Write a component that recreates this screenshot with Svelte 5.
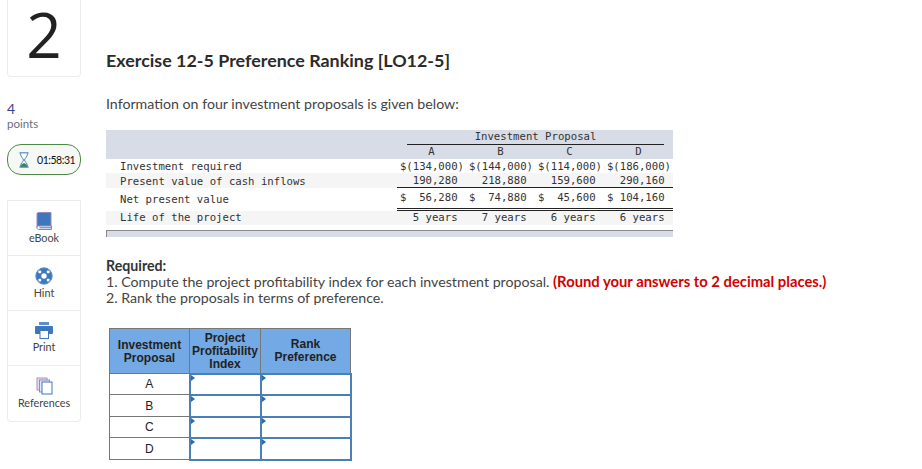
<script>
  const rows = [
    { label: 'Investment required', cls: 'r1', vals: ['$(134,000)', '$(144,000)', '$(114,000)', '$(186,000)'] },
    { label: 'Present value of cash inflows', cls: 'r2 alt', vals: ['190,280 ', '218,880 ', '159,600 ', '290,160 '] },
    { label: 'Net present value', cls: 'r3', vals: ['$  56,280 ', '$  74,880 ', '$  45,600 ', '$ 104,160 '] },
    { label: 'Life of the project', cls: 'r4 alt', vals: ['5 years ', '7 years ', '6 years ', '6 years '] }
  ];
  const answers = ['A', 'B', 'C', 'D'];
</script>

<div class="page">
  <aside class="side">
    <div class="qnum">2</div>
    <div class="points"><span class="pts-n">4</span><span class="pts-l">points</span></div>
    <div class="timer">
      <svg width="10" height="16" viewBox="0 0 10 16">
        <path d="M.5 1h9M.5 15h9" stroke="#4a86c5" stroke-width="1.600" fill="none"/>
        <path d="M1.500 1.500c0 3.500 2.800 4.800 3 6.500-.2 1.700-3 3-3 6.500h7c0-3.500-2.800-4.800-3-6.500.2-1.700 3-3 3-6.500" stroke="#4a86c5" stroke-width="1" fill="#fff"/>
        <path d="M1.600 14.500c.4-2 2.200-3 3.400-3.400 1.200.4 3 1.400 3.400 3.400z" fill="#3f8a3f"/>
      </svg>
      <span>01:58:31</span>
    </div>
    <nav class="tools">
      <div class="tool">
        <svg width="17" height="18" viewBox="0 0 17 18">
          <path d="M1 2.200C1 1.200 1.700.5 2.600.5H15v13.500H2.600C1.700 14 1 14.600 1 15.500z" fill="#3d78bd" stroke="#9c86bd" stroke-width="1"/>
          <path d="M1 15.500c0-1 .7-1.500 1.600-1.500H15.500v3.500H2.600C1.700 17.500 1 16.500 1 15.500z" fill="#fff" stroke="#8d7fb5" stroke-width="1"/>
          <path d="M3.500 15.800h11.500" stroke="#3d78bd" stroke-width="1"/>
        </svg>
        <span>eBook</span>
      </div>
      <div class="tool">
        <svg width="18" height="18" viewBox="0 0 18 18">
          <circle cx="9" cy="9" r="8.200" fill="#3d78bd" stroke="#5b8fcb" stroke-width="1"/>
          <circle cx="9" cy="9" r="2.700" fill="#fff"/>
          <rect x="3.400" y="3.400" width="2.800" height="2.800" rx=".8" fill="#fff"/>
          <rect x="11.800" y="3.400" width="2.800" height="2.800" rx=".8" fill="#fff"/>
          <rect x="3.400" y="11.800" width="2.800" height="2.800" rx=".8" fill="#fff"/>
          <rect x="11.800" y="11.800" width="2.800" height="2.800" rx=".8" fill="#fff"/>
        </svg>
        <span>Hint</span>
      </div>
      <div class="tool">
        <svg width="18" height="17" viewBox="0 0 18 17">
          <rect x="4" y="0" width="10" height="3" fill="#5b8fcb"/>
          <rect x="0" y="4" width="18" height="8" rx="1" fill="#3d78bd"/>
          <rect x="5" y="8.500" width="8.500" height="8" fill="#fff" stroke="#3d78bd"/>
        </svg>
        <span>Print</span>
      </div>
      <div class="tool">
        <svg width="17" height="18" viewBox="0 0 17 18">
          <rect x="1" y="1" width="10" height="12" fill="#e6def0" stroke="#a393c4"/>
          <rect x="3.500" y="3" width="10" height="12" fill="#e6e6f2" stroke="#8d8db8"/>
          <rect x="6" y="5" width="10" height="12" fill="#fff" stroke="#3d78bd"/>
        </svg>
        <span>References</span>
      </div>
    </nav>
  </aside>

  <main class="main">
    <h1>Exercise 12-5 Preference Ranking [LO12-5]</h1>
    <p class="intro">Information on four investment proposals is given below:</p>

    <table class="data">
      <thead>
        <tr class="h1">
          <th class="lab"></th>
          <th colspan="4"><span class="span-title">Investment Proposal</span></th>
        </tr>
        <tr class="h2">
          <th class="lab"></th>
          <th>A</th><th>B</th><th>C</th><th>D</th>
        </tr>
      </thead>
      <tbody>
        {#each rows as row}
          <tr class={row.cls}>
            <td class="lab">{row.label}</td>
            {#each row.vals as v}
              <td class="num">{v}</td>
            {/each}
          </tr>
        {/each}
        <tr class="gap"><td colspan="5"></td></tr>
        <tr class="foot"><td colspan="5"></td></tr>
      </tbody>
    </table>

    <div class="required">
      <div class="req-h">Required:</div>
      <div>1. Compute the project profitability index for each investment proposal. <b>(Round your answers to 2 decimal places.)</b></div>
      <div>2. Rank the proposals in terms of preference.</div>
    </div>

    <table class="answer">
      <thead>
        <tr>
          <th class="c1">Investment<br />Proposal</th>
          <th class="c2">Project<br />Profitability<br />Index</th>
          <th class="c3">Rank<br />Preference</th>
        </tr>
      </thead>
      <tbody>
        {#each answers as a}
          <tr>
            <td class="name">{a}</td>
            <td class="input"><i></i></td>
            <td class="input"><i></i></td>
          </tr>
        {/each}
      </tbody>
    </table>
  </main>
</div>

<style>
  :global(body) {
    margin: 0;
    background: #fff;
  }
  .page {
    display: flex;
    width: 922px;
    height: 469px;
    overflow: hidden;
    font-family: Lato, "Open Sans", sans-serif;
    color: #333;
  }
  .side {
    width: 74px;
    margin-left: 7px;
    flex: none;
    display: flex;
    flex-direction: column;
  }
  .qnum {
    height: 77px;
    box-sizing: border-box;
    border: 1px solid #ececec;
    border-top: none;
    border-radius: 0 0 4px 4px;
    font-size: 62px;
    line-height: 68px;
    text-align: center;
    color: #222;
    font-family: "Open Sans", sans-serif;
  }
  .points {
    margin-top: 24px;
    display: flex;
    flex-direction: column;
  }
  .pts-n {
    font-size: 14px;
    line-height: 16px;
    color: #3b3f94;
  }
  .pts-l {
    font-size: 11.500px;
    line-height: 14px;
    color: #6d6d80;
  }
  .timer {
    margin-top: 13px;
    height: 31px;
    box-sizing: border-box;
    border: 1px solid #4d8a45;
    border-radius: 14px;
    background: #f5f8f4;
    display: flex;
    align-items: center;
    gap: 8px;
    padding-left: 11px;
    font-size: 10.500px;
    letter-spacing: -0.45px;
    color: #111;
    white-space: nowrap;
  }
  .tools {
    margin-top: 25px;
    border: 1px solid #ececec;
    border-radius: 0 0 4px 4px;
    display: flex;
    flex-direction: column;
  }
  .tool {
    height: 55px;
    box-sizing: border-box;
    border-bottom: 1px solid #ececec;
    display: flex;
    flex-direction: column;
    align-items: center;
    gap: 1px;
    padding-top: 11px;
    font-size: 10.800px;
    line-height: 14px;
    color: #444;
  }
  .tool:last-child {
    border-bottom: none;
  }
  .main {
    margin-left: 25px;
    flex: 1;
    min-width: 0;
  }
  h1 {
    margin: 50px 0 0;
    font-size: 17.900px;
    line-height: 21px;
    font-weight: 700;
    color: #2b2b2b;
  }
  .intro {
    margin: 24px 0 0;
    font-size: 14.200px;
    line-height: 17px;
    color: #444;
  }
  .data {
    margin-top: 18px;
    width: 567px;
    border-collapse: separate;
    border-spacing: 0;
    table-layout: fixed;
    font-family: "DejaVu Sans Mono", monospace;
    font-size: 10.650px;
    color: #333;
  }
  .data th, .data td {
    padding: 0;
    font-weight: 400;
    white-space: pre;
  }
  .data th.lab, .data td.lab {
    width: 291px;
  }
  .data td.lab {
    padding-left: 14px;
    text-align: left;
    box-sizing: border-box;
  }
  .h1, .h2 {
    background: #d8dce6;
  }
  .h1 th { height: 15px; vertical-align: bottom; }
  .h2 th { height: 14px; line-height: 14px; }
  .span-title {
    display: block;
    margin: 0 9px 0 10px;
    border-bottom: 1px solid #222;
    text-align: center;
    line-height: 14px;
  }
  .data td.num {
    text-align: right;
    padding-right: 2px;
  }
  .r1 td { height: 14px; }
  .r2 td { height: 15px; box-sizing: border-box; padding-top: 1px; }
  .r3 td { height: 23px; box-sizing: border-box; }
  .r4 td { height: 14px; box-sizing: border-box; padding-bottom: 1px; }
  .alt { background: #f5f5f5; }
  .r2 td.num { border-bottom: 1px solid #222; }
  .r3 td.num { border-bottom: 3px double #222; padding-bottom: 1px; }
  .gap td { height: 5px; }
  .foot td {
    height: 6px;
    background: #d8dce6;
    border-top: 1px solid #8a8a8a;
    border-left: 1px solid #8a8a8a;
  }
  .required {
    margin-top: 21px;
    font-size: 14.200px;
    line-height: 16px;
    color: #444;
  }
  .req-h {
    font-weight: 700;
    color: #333;
  }
  .required b {
    color: #d40000;
    font-size: 14.800px;
    line-height: 14px;
    font-weight: 700;
  }
  .answer {
    margin: 22px 0 0 3px;
    width: 241px;
    border-collapse: collapse;
    table-layout: fixed;
    font-family: "Liberation Sans", Arial, sans-serif;
    font-size: 12px;
    color: #222;
  }
  .answer th {
    background: #73a9e4;
    border: 1px solid #777;
    height: 45px;
    padding: 1px 0 0;
    line-height: 13px;
    font-weight: 700;
    box-sizing: border-box;
  }
  .c1 { width: 80px; }
  .c2 { width: 71px; }
  .c3 { width: 90px; }
  .name {
    border: 1px solid #777;
    text-align: center;
    height: 20px;
    padding: 0;
  }
  tbody tr:nth-child(even) .name {
    height: 21px;
  }
  .input {
    position: relative;
    border: 2px solid #4a7fb8;
    padding: 0;
  }
  .input i {
    position: absolute;
    left: 0;
    top: 0;
    border-left: 4px solid #2a6ab0;
    border-top: 3px solid transparent;
    border-bottom: 3px solid transparent;
  }
</style>
